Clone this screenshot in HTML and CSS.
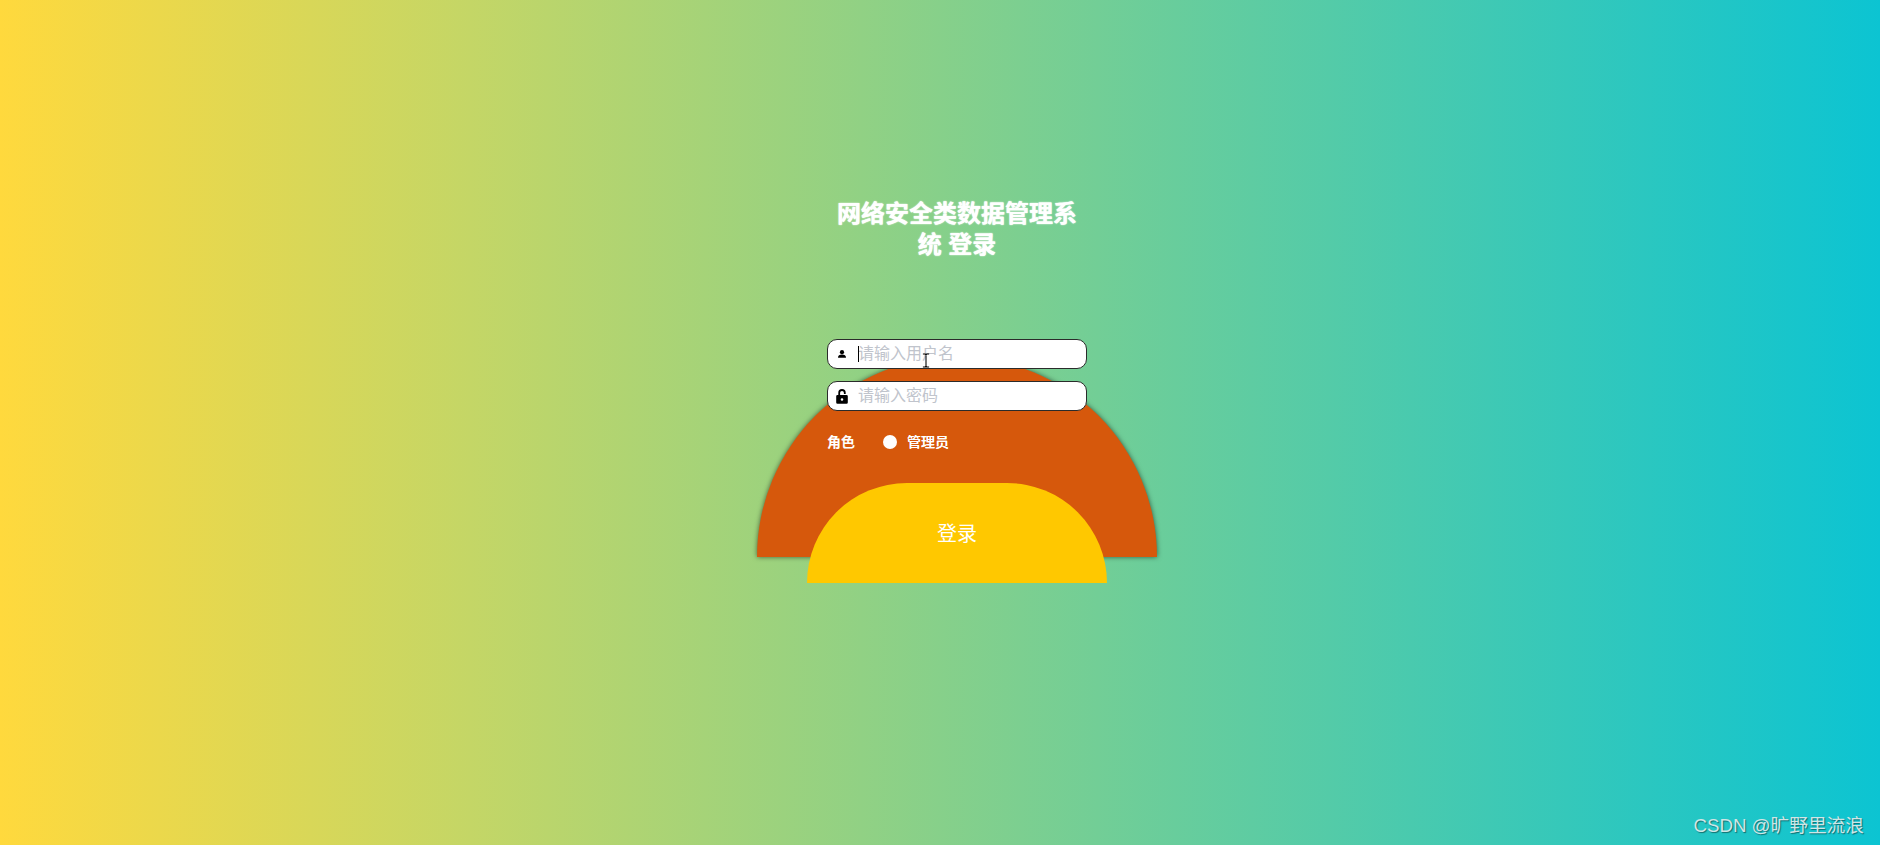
FILE: index.html
```html
<!DOCTYPE html>
<html lang="zh-CN">
<head>
<meta charset="utf-8">
<title>网络安全类数据管理系统 登录</title>
<link rel="stylesheet" href="styles.css">
</head>
<body>
<main class="page">
  <div class="login">
    <h1 class="title">网络安全类数据管理系统 登录</h1>
    <form class="form">
      <div class="arc"></div>
      <div class="field">
        <svg class="icon" viewBox="0 0 16 16"><circle cx="8" cy="4.400" r="4.200"/><path d="M0 15.500c0-4.500 3-6.300 8-6.300s8 1.800 8 6.300z"/></svg>
        <input class="input" type="text" placeholder="请输入用户名">
        <span class="caret"></span>
        <svg class="ibeam" viewBox="0 0 9 16"><path d="M1 .7h2.600l.9.8.9-.8H8M4.500 1.500v13M1 15.300h2.600l.9-.8.9.8H8" fill="none" stroke="#000" stroke-width="1.200"/></svg>
      </div>
      <div class="field">
        <svg class="icon icon-lock" viewBox="0 0 12 15"><path fill-rule="evenodd" d="M2.300 6V3.800a3.700 3.700 0 0 1 7.400 0v1.200H7.900V3.800a1.900 1.900 0 0 0-3.800 0V6h6.400A1.300 1.300 0 0 1 11.800 7.300v6.200a1.300 1.300 0 0 1-1.300 1.300h-9A1.300 1.300 0 0 1 .2 13.500V7.300A1.300 1.300 0 0 1 1.500 6zM6 9.200a1.300 1.300 0 1 0 0 2.600 1.300 1.300 0 0 0 0-2.600z"/></svg>
        <input class="input" type="password" placeholder="请输入密码">
      </div>
      <div class="role">
        <span class="role-label">角色</span>
        <span class="radio"></span>
        <span class="role-name">管理员</span>
      </div>
      <button class="submit" type="button"><span class="submit-text">登录</span></button>
    </form>
  </div>
  <div class="watermark">CSDN @旷野里流浪</div>
</main>
</body>
</html>
```
FILE: styles.css
```css
* { box-sizing: border-box; }
html, body { margin: 0; height: 100%; overflow: hidden; }
body { font-family: "Liberation Sans", "Noto Sans CJK SC", sans-serif; }
.page {
  position: relative;
  height: 845px;
  display: flex;
  justify-content: center;
  padding-top: 198px;
  padding-left: 34px;
  background: linear-gradient(to right, #ffd93d 0%, #c4d666 25%, #0cc4d2 100%);
}
.login { width: 260px; }
.title {
  margin: 0;
  font-size: 24px;
  line-height: 31px;
  font-weight: 700;
  color: #fff;
  text-align: center;
  text-shadow: 0 0 1px #fff, 0 0 2px rgba(255, 255, 255, .5);
}
.form {
  position: relative;
  margin-top: 79px;
  display: flex;
  flex-direction: column;
}
.arc {
  position: absolute;
  left: -70px;
  top: 18px;
  width: 400px;
  height: 200px;
  border-radius: 200px 200px 0 0;
  background: #d6580c;
  box-shadow: 0 0 5px rgba(0, 0, 0, .55);
}
.field {
  position: relative;
  height: 30px;
  margin-bottom: 12px;
}
.input {
  display: block;
  width: 100%;
  height: 100%;
  padding: 0 10px 0 30px;
  border: 1px solid #2b2b2b;
  border-radius: 10px;
  background: #fff;
  font: 16px "Liberation Sans", "Noto Sans CJK SC", sans-serif;
  outline: none;
}
.input::placeholder { color: #c0c4cc; opacity: 1; }
.icon {
  position: absolute;
  left: 11px;
  top: 11px;
  width: 8px;
  height: 8px;
  fill: #000;
  z-index: 1;
}
.icon-lock { left: 9px; top: 8px; width: 12px; height: 15px; }
.caret {
  position: absolute;
  left: 31px;
  top: 7px;
  width: 1px;
  height: 16px;
  background: #000;
}
.ibeam {
  position: absolute;
  left: 95px;
  top: 13px;
  width: 8px;
  height: 17px;
  z-index: 2;
}
.role {
  display: flex;
  align-items: center;
  height: 20px;
  margin-top: 8px;
  color: #fff;
  font-size: 14px;
  position: relative;
}
.role-label { font-weight: 700; width: 56px; }
.radio {
  align-self: flex-start;
  width: 14px;
  height: 14px;
  margin-top: 4px;
  border-radius: 50%;
  background: #fff;
}
.role-name { margin-left: 10px; font-weight: 500; text-shadow: 0 0 .5px #fff; }
.submit {
  position: relative;
  align-self: center;
  flex: none;
  width: 300px;
  height: 100px;
  margin-top: 32px;
  padding: 0 0 2px;
  border: 0;
  border-radius: 100px 100px 0 0;
  background: #ffc800;
  color: #fff;
  font: 20px "Liberation Sans", "Noto Sans CJK SC", sans-serif;
}
.submit-text { display: block; }
.watermark {
  position: absolute;
  right: 16px;
  bottom: 5px;
  font: 18.700px/28px "Liberation Sans", "Noto Sans CJK SC", sans-serif;
  color: #cfe6e6;
  text-shadow: 1px 1px 1px rgba(0, 0, 0, .45);
}
```
